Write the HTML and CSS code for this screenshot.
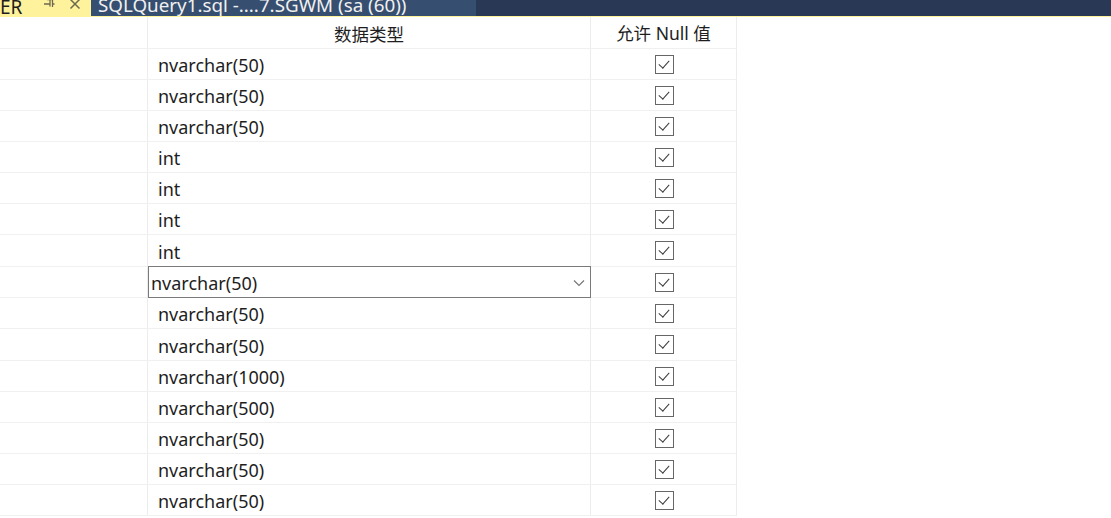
FILE: index.html
```html
<!DOCTYPE html>
<html>
<head>
<meta charset="utf-8">
<link rel="stylesheet" href="styles.css">
</head>
<body>
<div class="tabstrip">
  <div class="tab tab-active">
    <span class="tab-label">ER</span>
    <svg class="pin" width="12" height="12" viewBox="0 0 12 12"><path d="M1 6H7M4 1.5H9.5V9M7 2V8.5M9.5 6H11.5" stroke="#6d6a4f" stroke-width="1.3" fill="none"/></svg>
    <svg class="close" width="12" height="12" viewBox="0 0 12 12"><path d="M1.5 0.5L10.5 9.5M10.5 0.5L1.5 9.5" stroke="#6d6a4f" stroke-width="1.5" fill="none"/></svg>
  </div>
  <div class="tab tab-doc"><span class="doc-label">SQLQuery1.sql -....7.SGWM (sa (60))</span></div>
</div>
<div class="tabline"></div>
<div class="grid">
  <div class="row header">
    <div class="cell c1"></div>
    <div class="cell c2 center">数据类型</div>
    <div class="cell c3 center">允许 Null 值</div>
  </div>
  <div class="row"><div class="cell c1"></div><div class="cell c2">nvarchar(50)</div><div class="cell c3"><span class="chk"></span></div></div>
  <div class="row"><div class="cell c1"></div><div class="cell c2">nvarchar(50)</div><div class="cell c3"><span class="chk"></span></div></div>
  <div class="row"><div class="cell c1"></div><div class="cell c2">nvarchar(50)</div><div class="cell c3"><span class="chk"></span></div></div>
  <div class="row"><div class="cell c1"></div><div class="cell c2">int</div><div class="cell c3"><span class="chk"></span></div></div>
  <div class="row"><div class="cell c1"></div><div class="cell c2">int</div><div class="cell c3"><span class="chk"></span></div></div>
  <div class="row"><div class="cell c1"></div><div class="cell c2">int</div><div class="cell c3"><span class="chk"></span></div></div>
  <div class="row tall"><div class="cell c1"></div><div class="cell c2">int</div><div class="cell c3"><span class="chk"></span></div></div>
  <div class="row"><div class="cell c1"></div><div class="cell c2 editing"><span>nvarchar(50)</span><svg class="chev" width="12" height="8" viewBox="0 0 12 8"><path d="M1 1.5L6 6.5L11 1.5" stroke="#777" stroke-width="1.2" fill="none"/></svg></div><div class="cell c3"><span class="chk"></span></div></div>
  <div class="row"><div class="cell c1"></div><div class="cell c2">nvarchar(50)</div><div class="cell c3"><span class="chk"></span></div></div>
  <div class="row tall"><div class="cell c1"></div><div class="cell c2">nvarchar(50)</div><div class="cell c3"><span class="chk"></span></div></div>
  <div class="row"><div class="cell c1"></div><div class="cell c2">nvarchar(1000)</div><div class="cell c3"><span class="chk"></span></div></div>
  <div class="row"><div class="cell c1"></div><div class="cell c2">nvarchar(500)</div><div class="cell c3"><span class="chk"></span></div></div>
  <div class="row"><div class="cell c1"></div><div class="cell c2">nvarchar(50)</div><div class="cell c3"><span class="chk"></span></div></div>
  <div class="row"><div class="cell c1"></div><div class="cell c2">nvarchar(50)</div><div class="cell c3"><span class="chk"></span></div></div>
  <div class="row"><div class="cell c1"></div><div class="cell c2">nvarchar(50)</div><div class="cell c3"><span class="chk"></span></div></div>
</div>
</body>
</html>
```
FILE: styles.css
```css
html, body {
  margin: 0;
  padding: 0;
  background: #ffffff;
  overflow: hidden;
}
body {
  font-family: "Noto Sans", "Noto Sans CJK SC", sans-serif;
  color: #1e1e1e;
}
.tabstrip {
  display: flex;
  height: 16px;
  background: #293955;
  overflow: hidden;
}
.tab {
  height: 16px;
  display: flex;
  align-items: flex-end;
  overflow: hidden;
}
.tab-active {
  width: 91px;
  background: #fff29d;
}
.tab-label {
  font-size: 19px;
  line-height: 16px;
  color: #1e1e1e;
  position: relative;
  top: -1px;
}
.pin {
  margin-left: 21px;
  margin-bottom: 6px;
}
.close {
  margin-left: 14px;
  margin-bottom: 5px;
}
.tab-doc {
  width: 385px;
  background: #364e6f;
}
.doc-label {
  color: #f0f0f0;
  font-size: 18.8px;
  line-height: 16px;
  margin-left: 7px;
  position: relative;
  top: -3px;
  white-space: nowrap;
}
.tabline {
  height: 1px;
  background: #fff29d;
}
.grid {
  display: flex;
  flex-direction: column;
}
.row {
  display: flex;
  height: 31px;
  border-bottom: 1px solid #f0f0f0;
  box-sizing: border-box;
  width: 737px;
}
.row.tall {
  height: 32px;
}
.row.header {
  height: 32px;
}
.cell {
  display: flex;
  align-items: center;
  font-size: 18px;
  box-sizing: border-box;
  border-right: 1px solid #ececec;
  padding-top: 2px;
}
.header .cell {
  font-size: 17.5px;
}
.c1 { width: 148px; }
.c2 { width: 443px; padding-left: 10px; }
.c3 { width: 146px; justify-content: center; padding-top: 0; }
.center { justify-content: center; padding-left: 0; }
.c2.editing {
  border: 1px solid #7a7a7a;
  padding-left: 2px;
  padding-right: 5px;
  justify-content: space-between;
  margin-top: -1px;
  height: 32px;
}
.chk {
  width: 19px;
  height: 19px;
  box-sizing: border-box;
  border: 1.5px solid #666666;
  background: #ffffff;
  position: relative;
  margin-left: 1px;
}
.chk::after {
  content: "";
  position: absolute;
  left: 5px;
  top: 2px;
  width: 5px;
  height: 9px;
  border-right: 1.8px solid #3a3a3a;
  border-bottom: 1.8px solid #3a3a3a;
  transform: rotate(42deg);
}
```
